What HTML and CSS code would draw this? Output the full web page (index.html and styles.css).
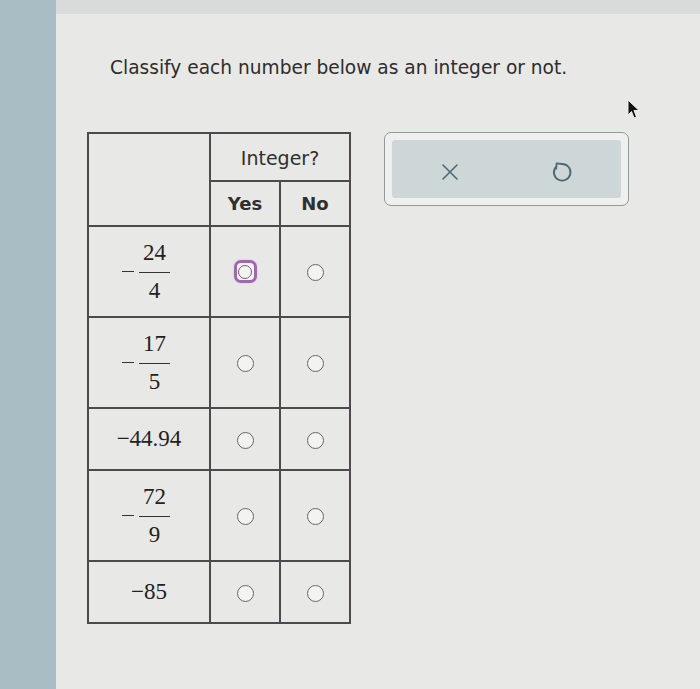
FILE: index.html
```html
<!DOCTYPE html>
<html>
<head>
<meta charset="utf-8">
<link rel="stylesheet" href="styles.css">
</head>
<body>
<div class="page">
  <div class="side"></div>
  <div class="main">
    <div class="topbar"></div>
    <div class="content">
      <p class="prompt">Classify each number below as an integer or not.</p>
      <div class="work">
        <table class="grid">
          <tr class="h1">
            <td rowspan="2" class="blank"></td>
            <td colspan="2" class="head">Integer?</td>
          </tr>
          <tr class="h2">
            <td class="sub">Yes</td>
            <td class="sub">No</td>
          </tr>
          <tr class="frow">
            <td class="num"><span class="frac"><span class="minus"></span><span class="fr"><span class="n">24</span><span class="d">4</span></span></span></td>
            <td><span class="sel"><span class="radio"></span></span></td>
            <td><span class="radio"></span></td>
          </tr>
          <tr class="frow">
            <td class="num"><span class="frac"><span class="minus"></span><span class="fr"><span class="n">17</span><span class="d">5</span></span></span></td>
            <td><span class="radio"></span></td>
            <td><span class="radio"></span></td>
          </tr>
          <tr class="srow">
            <td class="num">−44.94</td>
            <td><span class="radio"></span></td>
            <td><span class="radio"></span></td>
          </tr>
          <tr class="frow">
            <td class="num"><span class="frac"><span class="minus"></span><span class="fr"><span class="n">72</span><span class="d">9</span></span></span></td>
            <td><span class="radio"></span></td>
            <td><span class="radio"></span></td>
          </tr>
          <tr class="srow">
            <td class="num">−85</td>
            <td><span class="radio"></span></td>
            <td><span class="radio"></span></td>
          </tr>
        </table>
        <div class="tools">
          <div class="tools-inner">
            <svg class="icon icon-x" width="18" height="18" viewBox="0 0 18 18"><path d="M2 2 L16 16 M16 2 L2 16" stroke="#4e6a72" stroke-width="1.6" fill="none" stroke-linecap="round"/></svg>
            <svg class="icon icon-undo" width="24" height="24" viewBox="0 0 24 24"><path d="M12 4 A8.3 8.3 0 1 1 5.8 7 M12 4 L6.6 3.4 M6.6 3.4 L6.2 8.6" stroke="#4e6a72" stroke-width="1.9" fill="none" stroke-linecap="round" stroke-linejoin="round"/></svg>
          </div>
        </div>
      </div>
    </div>
  </div>
  <svg class="cursor" width="14" height="22" viewBox="0 0 14 22"><path d="M1 1 L1 16 L4.5 12.5 L7 19 L9.5 18 L7 11.5 L12 11.5 Z" fill="#111" stroke="#eee" stroke-width="1"/></svg>
</div>
</body>
</html>
```

FILE: styles.css
```css
html, body {
  margin: 0;
  padding: 0;
}
body {
  width: 700px;
  height: 689px;
  overflow: hidden;
  background: #e7e7e5;
}
.page {
  position: relative;
  display: flex;
  width: 700px;
  height: 689px;
}
.side {
  width: 56px;
  flex: none;
  background: #a8bec4;
}
.main {
  flex: 1;
  display: flex;
  flex-direction: column;
  background: #e8e8e6;
}
.topbar {
  height: 14px;
  background: #d8dbda;
}
.content {
  padding: 42px 0 0 31px;
}
.prompt {
  margin: 0;
  padding-left: 23px;
  font-family: "DejaVu Sans", sans-serif;
  font-size: 18.6px;
  color: #2d2d2d;
  line-height: 24px;
}
.work {
  display: flex;
  align-items: flex-start;
  margin-top: 52px;
}
.grid {
  border-collapse: collapse;
  border: 2px solid #4d4a4e;
  font-family: "DejaVu Sans", sans-serif;
  color: #2f2f2f;
}
.grid td {
  border: 2px solid #4d4a4e;
  padding: 0;
  text-align: center;
  vertical-align: middle;
}
.grid td.blank { width: 120px; }
.h1 td { height: 44px; }
.h2 td { height: 43px; }
.grid td.head {
  font-size: 19px;
  padding-top: 2px;
}
.grid td.sub {
  width: 68px;
  font-weight: bold;
  font-size: 18px;
}
.frow td { height: 89px; }
.srow td { height: 60px; }
.num {
  font-family: "Liberation Serif", serif;
  font-size: 23px;
  color: #222;
}
.frac {
  display: inline-flex;
  align-items: center;
  gap: 5px;
  margin-left: -6px;
}
.minus {
  display: inline-block;
  width: 12px;
  height: 1.5px;
  background: #333;
}
.fr {
  display: inline-flex;
  flex-direction: column;
  align-items: center;
}
.fr .n {
  padding: 0 4px 7px;
  border-bottom: 1.5px solid #333;
  line-height: 24px;
}
.fr .d {
  padding-top: 6px;
  line-height: 24px;
}
.radio {
  display: inline-block;
  width: 17px;
  height: 17px;
  border: 1.4px solid #666;
  border-radius: 50%;
  box-sizing: border-box;
  vertical-align: middle;
  background: #f3f3f2;
}
.sel {
  display: inline-flex;
  align-items: center;
  justify-content: center;
  width: 23px;
  height: 23px;
  border: 3px solid #9d69ad;
  border-radius: 7px;
  box-sizing: border-box;
  vertical-align: middle;
  background: #f6f3f7;
  box-shadow: 0 0 2px #d7b9e0;
}
.sel .radio {
  width: 14px;
  height: 14px;
  border-width: 1.6px;
  border-color: #6c6570;
}
.tools {
  margin-left: 33px;
  width: 245px;
  height: 74px;
  box-sizing: border-box;
  border: 1.5px solid #8f9a9b;
  border-radius: 7px;
  padding: 7px;
  background: #efefed;
}
.tools-inner {
  height: 100%;
  background: #cdd7d7;
  border-radius: 3px;
  display: flex;
  align-items: center;
  padding: 0 0 0 49px;
}
.icon { display: block; }
.icon-x { margin-top: 5px; }
.icon-undo { margin-left: 91px; margin-top: 6px; }
.cursor {
  position: absolute;
  left: 627px;
  top: 99px;
}
```
